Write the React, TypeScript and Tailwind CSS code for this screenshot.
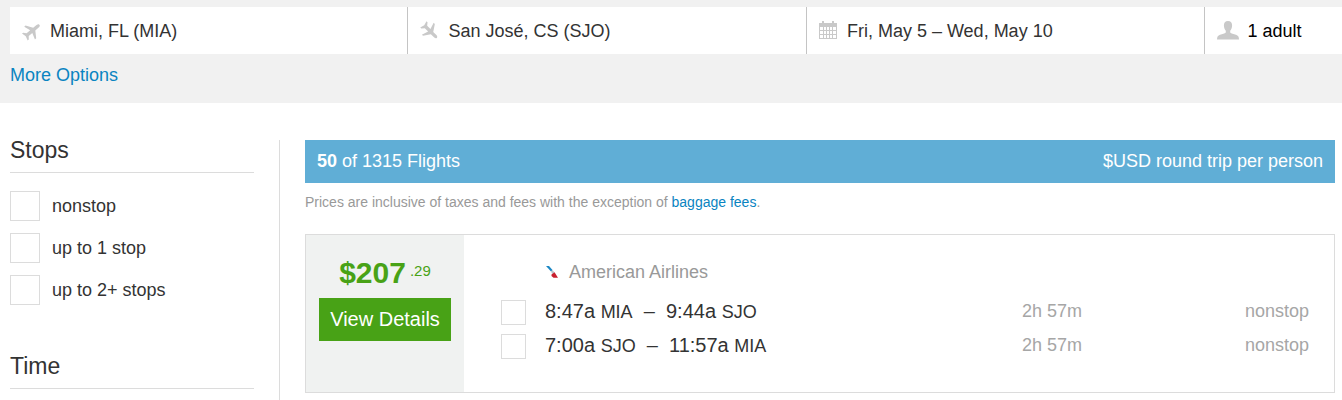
import React from "react";

const Plane = ({ className }: { className: string }) => (
  <svg viewBox="0 0 24 24" fill="#c9c9c9" className={className} aria-hidden="true">
    <path d="M22 15.8v-2L14 8.500V3.200C14 1.600 13 .2 12 .2S10 1.600 10 3.200v5.300L2 13.800v2l8-2.600v5.600l-3.300 2.700v1.700L12 21.800l5.300 1.400v-1.700L14 18.800v-5.600z" />
  </svg>
);

const Calendar = () => (
  <svg viewBox="0 0 18 19" className="w-[18px] h-[19px] shrink-0" aria-hidden="true">
    <path fill="#c9c9c9" d="M3 0h2v2h8V0h2v2h3v4H0V2h3z" />
    <path fill="none" stroke="#c9c9c9" d="M.5 5v13M17.500 5v13M0 17.500h18M4.500 6v12M7.500 6v12M10.500 6v12M13.500 6v12M1 9.500h16M1 13.500h16" />
  </svg>
);

const Person = () => (
  <svg viewBox="0 0 22 19" fill="#c9c9c9" className="w-[22px] h-[19px] shrink-0" aria-hidden="true">
    <path d="M11 0c2.800 0 4.200 1.800 4.100 4.600 0 2.200-.8 4-1.900 5.200v1.700c1 1.200 3.400 1.500 5.800 2.300 2 .7 3 2 3 4.700H0c0-2.700 1-4 3-4.700 2.400-.8 4.800-1.100 5.800-2.300V9.800C7.700 8.600 6.900 6.800 6.900 4.600 6.800 1.800 8.200 0 11 0z" />
  </svg>
);

const AirlineLogo = () => (
  <svg viewBox="0 0 14 14" className="w-[14px] h-[14px] shrink-0" aria-hidden="true">
    <path fill="#1b87c4" d="M1 1h3l3.500 4-1.500 1.500z" />
    <path fill="#b9c4cc" d="M6 6.500L7.500 5l2 2.500L7.200 9z" />
    <path fill="#c8202f" d="M6.500 9.500l3-2.300 3.500 5.600H8.500L6.500 11z" />
  </svg>
);

const stops = ["nonstop", "up to 1 stop", "up to 2+ stops"];

const legs = [
  { depart: "8:47a", from: "MIA", arrive: "9:44a", to: "SJO", duration: "2h 57m", stops: "nonstop" },
  { depart: "7:00a", from: "SJO", arrive: "11:57a", to: "MIA", duration: "2h 57m", stops: "nonstop" },
];

const SearchBar = () => {
  return (
    <header className="bg-[#f1f1f1] pt-[7px] pl-[10px] pb-[15px]">
      <form className="grid grid-cols-[35fr_35fr_35fr_12fr] h-[47px] bg-white">
        <label className="flex items-center min-w-0 pl-3 gap-2 border-r border-[#c4c4c4]">
          <Plane className="w-5 h-5 shrink-0 rotate-[50deg]" />
          <input type="text" aria-label="From" defaultValue="Miami, FL (MIA)" className="flex-1 min-w-0 outline-none" />
        </label>
        <label className="flex items-center min-w-0 pl-3 gap-2 border-r border-[#c4c4c4]">
          <Plane className="w-5 h-5 shrink-0 rotate-[135deg]" />
          <input type="text" aria-label="To" defaultValue="San José, CS (SJO)" className="flex-1 min-w-0 outline-none" />
        </label>
        <label className="flex items-center min-w-0 pl-3 gap-[10px] border-r border-[#c4c4c4]">
          <Calendar />
          <input type="text" aria-label="Dates" defaultValue="Fri, May 5 – Wed, May 10" className="flex-1 min-w-0 outline-none" />
        </label>
        <label className="flex items-center min-w-0 pl-3 gap-2">
          <Person />
          <select aria-label="Travelers" className="flex-1 min-w-0 appearance-none outline-none text-black">
            <option>1 adult</option>
            <option>2 adults</option>
          </select>
        </label>
      </form>
      <a href="#" className="block w-fit mt-2 leading-[26px] text-[#0a84c1]">
        More Options
      </a>
    </header>
  );
};

const Filters = () => {
  return (
    <aside className="w-[270px] shrink-0 border-r border-[#dcdcdc] pr-[25px]">
      <h2 className="h-[33px] border-b border-[#dcdcdc] text-[23px] leading-5">Stops</h2>
      <div className="flex flex-col gap-3 mt-[18px]">
        {stops.map((stop) => (
          <label key={stop} className="flex items-center gap-3">
            <input type="checkbox" className="appearance-none w-[30px] h-[30px] border border-[#dcdcdc] bg-white" />
            {stop}
          </label>
        ))}
      </div>
      <h2 className="mt-[51px] h-[33px] border-b border-[#dcdcdc] text-[23px] leading-5">Time</h2>
    </aside>
  );
};

const FlightCard = () => {
  return (
    <article className="flex border border-[#dcdcdc] mt-5">
      <div className="w-[158px] h-[157px] shrink-0 bg-[#f0f2f1] px-[13px] pt-[21px]">
        <div className="flex justify-center gap-1 text-[#48a216]">
          <span className="text-[30px] leading-[34px] font-bold">$207</span>
          <span className="text-[15px] leading-[30px]">.29</span>
        </div>
        <button className="w-full h-[43px] mt-2 pb-[2px] bg-[#48a216] text-white text-xl">View Details</button>
      </div>
      <div className="flex-1 min-w-0 pl-[37px] pr-[25px] pt-[25px]">
        <div className="flex items-center gap-[10px] h-6 pl-[44px] text-[#999]">
          <AirlineLogo />
          American Airlines
        </div>
        <div className="flex flex-col gap-[9px] mt-4">
          {legs.map((leg) => (
            <div key={leg.depart} className="flex items-start h-[25px]">
              <label className="flex flex-1 items-start gap-[19px]">
                <input type="checkbox" className="appearance-none w-[25px] h-[25px] border border-[#dcdcdc] bg-white" />
                <span className="text-xl leading-[23px] whitespace-pre">
                  {leg.depart} <span className="text-lg leading-[23px]">{leg.from}</span>
                  {"  –  "}
                  {leg.arrive} <span className="text-lg leading-[23px]">{leg.to}</span>
                </span>
              </label>
              <div className="flex justify-between w-[287px] leading-[23px] text-[#a6a6a6]">
                <span>{leg.duration}</span>
                <span>{leg.stops}</span>
              </div>
            </div>
          ))}
        </div>
      </div>
    </article>
  );
};

const App = () => {
  return (
    <div className="min-h-screen flex flex-col bg-white font-['Liberation_Sans',Arial,sans-serif] text-lg text-[#333]">
      <SearchBar />
      <div className="flex flex-1 pt-[37px] pl-[10px] pr-[7px]">
        <Filters />
        <main className="flex-1 min-w-0 pl-[25px]">
          <div className="flex items-center justify-between h-[43px] px-3 pb-[2px] bg-[#60aed6] text-white">
            <span>
              <b>50</b> of 1315 Flights
            </span>
            <span>$USD round trip per person</span>
          </div>
          <p className="mt-[7px] text-sm leading-6 text-[#999]">
            Prices are inclusive of taxes and fees with the exception of{" "}
            <a href="#" className="text-[#0a84c1]">baggage fees</a>.
          </p>
          <FlightCard />
        </main>
      </div>
    </div>
  );
};

export default App;
